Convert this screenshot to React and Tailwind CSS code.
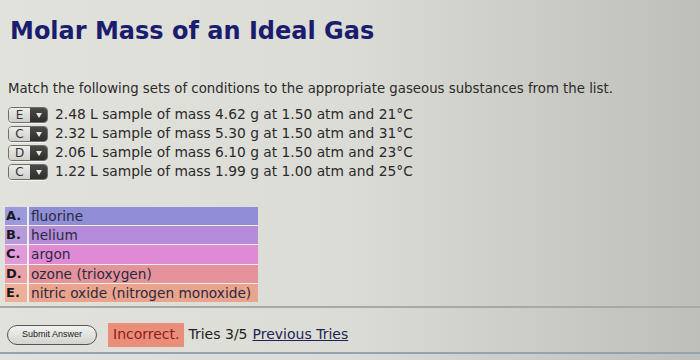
import React from "react";

const font = { fontFamily: '"DejaVu Sans", Verdana, sans-serif' };

function Select({ v }) {
  return (
    <div className="flex h-[16px] w-[40px] rounded-[4px] border border-[#6f6f68] overflow-hidden shadow-[0_1px_0_#f4f4f0]">
      <div className="w-[21px] flex items-center justify-center bg-linear-to-b from-[#ececea] to-[#cfcfcb] text-[12px] leading-none text-[#333]">
        {v}
      </div>
      <div className="flex-1 flex items-center justify-center bg-linear-to-b from-[#4a4a46] to-[#2e2e2b]">
        <div className="w-0 h-0 border-l-[3.5px] border-r-[3.5px] border-t-[5px] border-l-transparent border-r-transparent border-t-[#e8e8e8]" />
      </div>
    </div>
  );
}

const conds = [
  ["E", "2.48 L sample of mass 4.62 g at 1.50 atm and 21°C"],
  ["C", "2.32 L sample of mass 5.30 g at 1.50 atm and 31°C"],
  ["D", "2.06 L sample of mass 6.10 g at 1.50 atm and 23°C"],
  ["C", "1.22 L sample of mass 1.99 g at 1.00 atm and 25°C"],
];

const opts = [
  ["A.", "fluorine", "bg-[#9c9add]", "bg-[#908ed6]"],
  ["B.", "helium", "bg-[#b79ad9]", "bg-[#b48cd8]"],
  ["C.", "argon", "bg-[#e39ad8]", "bg-[#e08ad6]"],
  ["D.", "ozone (trioxygen)", "bg-[#e8a2a8]", "bg-[#e5939b]"],
  ["E.", "nitric oxide (nitrogen monoxide)", "bg-[#eeaf98]", "bg-[#eaa38c]"],
];

export default function App() {
  return (
    <div
      className="w-[700px] h-[360px] overflow-hidden bg-linear-to-r from-[#e2e2dd] via-[#dcdcd6] to-[#bfbfba] text-[#2a2a2a] flex flex-col"
      style={font}
    >
      <div className="pt-[16px] pl-[10px] h-[81px]">
        <h1 className="text-[24px] font-bold text-[#1a1c6e] leading-[30px]">Molar Mass of an Ideal Gas</h1>
      </div>
      <p className="pl-[8px] text-[13.3px] leading-[16px] text-[#2b2b2b]">
        Match the following sets of conditions to the appropriate gaseous substances from the list.
      </p>
      <div className="mt-[10px] pl-[8px] flex flex-col gap-[3px]">
        {conds.map(([v, t], i) => (
          <div key={i} className="flex items-center gap-[7px] h-[16px]">
            <Select v={v} />
            <span className="text-[13.8px] leading-none">{t}</span>
          </div>
        ))}
      </div>
      <div className="mt-[27px] ml-[5px] w-[253px] flex flex-col gap-[1px] bg-[#efefea]">
        {opts.map(([l, t, lb, rb], i) => (
          <div key={i} className="flex h-[18.2px] gap-[2px]">
            <div className={`w-[22px] ${lb} text-[13px] font-bold leading-[18px] pl-[1px] text-[#1a1a1a]`}>{l}</div>
            <div className={`flex-1 ${rb} text-[13.7px] leading-[18px] pl-[2px] text-[#2a2a40]`}>{t}</div>
          </div>
        ))}
      </div>
      <div className="mt-[4px] h-[2px] bg-[#a9a9a3]" />
      <div className="flex items-center pl-[7px] pt-[13px] h-[41px]">
        <div className="w-[90px] h-[20px] rounded-full border border-[#555] bg-linear-to-b from-[#f2f2ee] to-[#d3d3cf] flex items-center justify-center text-[9px] text-[#222]" style={{ fontFamily: '"Liberation Sans", Arial, sans-serif' }}>
          Submit Answer
        </div>
        <div className="ml-[11px] h-[24px] px-[5px] bg-[#ea8e7c] text-[#8b1d12] text-[14px] flex items-center">Incorrect.</div>
        <span className="ml-[4px] text-[14px] text-[#222]">Tries 3/5</span>
        <span className="ml-[5px] text-[14px] text-[#1e2355] underline">Previous Tries</span>
      </div>
      <div className="mt-[3px] h-[2px] bg-[#93a3b5]" />
    </div>
  );
}
